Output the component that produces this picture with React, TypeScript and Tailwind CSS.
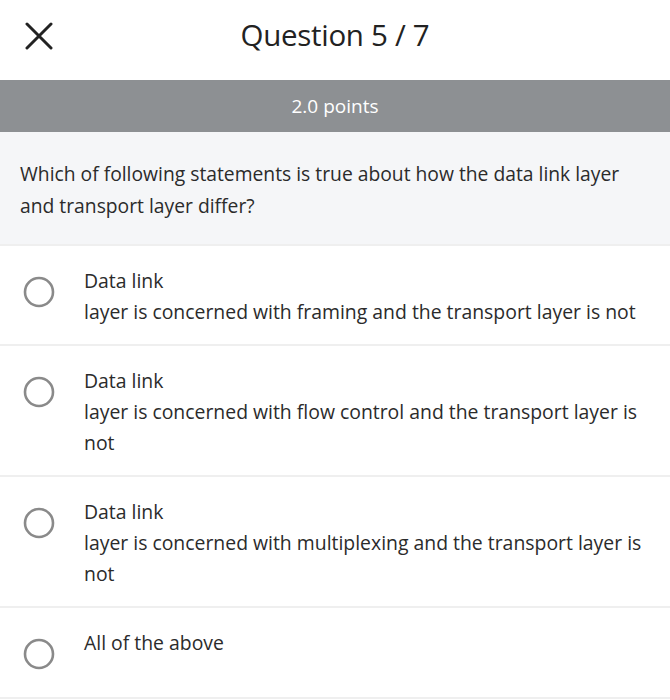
const options = [
  ["Data link", "layer is concerned with framing and the transport layer is not"],
  ["Data link", "layer is concerned with flow control and the transport layer is not"],
  ["Data link", "layer is concerned with multiplexing and the transport layer is not"],
  ["All of the above"],
];

function Radio() {
  return (
    <svg width="32" height="32" viewBox="0 0 32 32" className="shrink-0">
      <circle cx="16" cy="16" r="14" fill="none" stroke="#8a8a8a" strokeWidth="2.6" />
    </svg>
  );
}

export default function App() {
  return (
    <div
      className="w-[670px] min-h-[700px] bg-white text-[#2b2b2b]"
      style={{ fontFamily: '"Open Sans", sans-serif' }}
    >
      <header className="relative flex h-[80px] items-center justify-center">
        <button className="absolute left-[24px] top-[22px] p-0">
          <svg width="30" height="28" viewBox="0 0 30 28">
            <path d="M3 2 L27 26 M27 2 L3 26" stroke="#222" strokeWidth="3" strokeLinecap="round" />
          </svg>
        </button>
        <h1 className="-mt-[9px] text-[29.5px] font-normal tracking-[-0.01em] text-[#222]">Question 5 / 7</h1>
      </header>

      <div className="flex h-[52px] items-center justify-center bg-[#8d9093] text-[19px] text-white">
        2.0 points
      </div>

      <div className="bg-[#f5f6f8] px-[20px] pt-[26px] pb-[22px] text-[19.3px] leading-[32px] text-[#2b2b2b]">
        Which of following statements is true about how the data link layer and transport layer differ?
      </div>

      <ul className="border-b-2 border-[#efefef]">
        {options.map((lines, i) => (
          <li key={i} className="flex items-start border-t-2 border-[#efefef] pt-[19px] pb-[17px] pl-[23px] pr-[20px]">
            <div className="mt-[11px] mb-[10px]">
              <Radio />
            </div>
            <div className="ml-[29px] text-[19.4px] leading-[31px] text-[#2b2b2b]">
              {lines.map((t, j) => (
                <p key={j}>{t}</p>
              ))}
            </div>
          </li>
        ))}
      </ul>
    </div>
  );
}
